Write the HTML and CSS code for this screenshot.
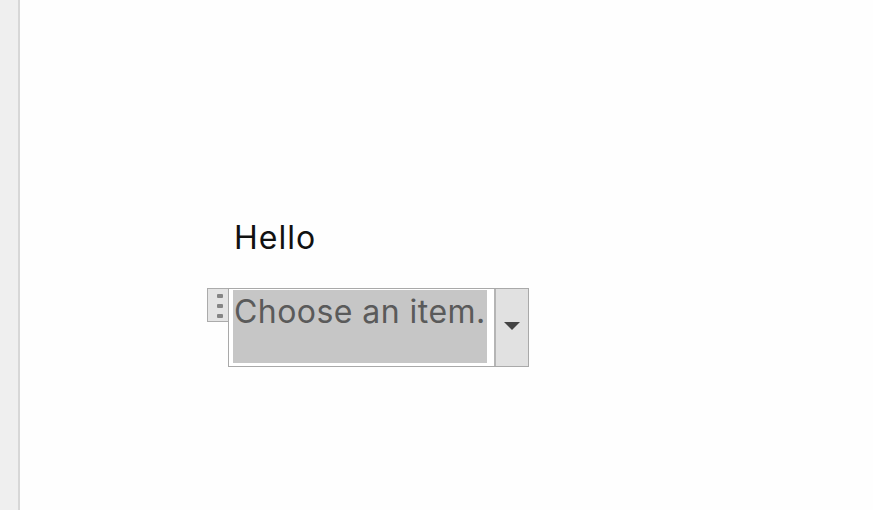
FILE: index.html
```html
<!DOCTYPE html>
<html lang="en">

<head>
  <meta charset="UTF-8">
  <title>Document</title>
  <link rel="stylesheet" href="styles.css">
</head>

<body>
  <div class="app">
    <aside class="gutter"></aside>
    <main class="page">
      <p class="hello">Hello</p>
      <div class="field">
        <span class="handle"><i></i><i></i><i></i></span>
        <div class="control">
          <span class="value">Choose an item.</span>
          <span class="drop">
            <svg width="16" height="8" viewBox="0 0 16 8"><path d="M0 0H16L8 8Z" fill="#444"/></svg>
          </span>
        </div>
      </div>
    </main>
  </div>
</body>

</html>
```

FILE: styles.css
```css
* {
  box-sizing: border-box;
}

body {
  margin: 0;
  font-family: Inter, 'Liberation Sans', sans-serif;
  background: #fff;
}

.app {
  display: flex;
  height: 510px;
}

.gutter {
  width: 20px;
  background: #efefef;
  border-right: 2px solid #d7d7d7;
}

.page {
  flex: 1;
  background: #fefefe;
  padding: 218px 0 0 187px;
}

.hello {
  margin: 0 0 30px 27px;
  font-size: 32px;
  line-height: 40px;
  letter-spacing: 1px;
  color: #111;
}

.field {
  display: flex;
  align-items: flex-start;
}

.handle {
  width: 22px;
  height: 34px;
  background: #e4e4e4;
  border: 1px solid #ababab;
  display: flex;
  flex-direction: column;
  align-items: center;
  gap: 6px;
  padding: 5px 0 0 3px;
}

.handle i {
  display: block;
  width: 6px;
  height: 4px;
  border-radius: 1px;
  background: #858585;
}

.control {
  display: flex;
  width: 301px;
  height: 79px;
  margin-left: -1px;
  border: 1px solid #a9a9a9;
  background: #fff;
}

.value {
  width: 254px;
  margin: 1px 0 3px 4px;
  padding: 2px 0 0 1px;
  background: #c6c6c6;
  color: #5a5a5a;
  font-size: 32px;
  line-height: 40px;
  letter-spacing: 0.45px;
  white-space: nowrap;
}

.drop {
  margin-left: auto;
  width: 34px;
  background: #e1e1e1;
  border-left: 2px solid #b5b5b5;
  display: flex;
  justify-content: center;
  padding-top: 33px;
}
```
